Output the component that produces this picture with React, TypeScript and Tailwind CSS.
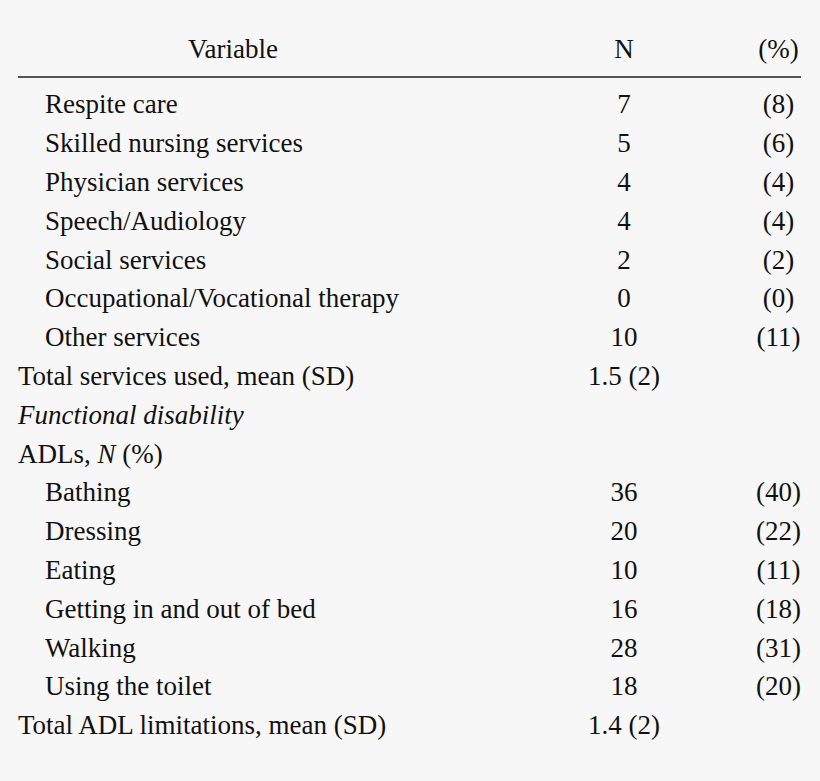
type Row = {
  label: React.ReactNode;
  n?: string;
  pct?: string;
  indent?: boolean;
};

const rows: Row[] = [
  { label: "Respite care", n: "7", pct: "(8)", indent: true },
  { label: "Skilled nursing services", n: "5", pct: "(6)", indent: true },
  { label: "Physician services", n: "4", pct: "(4)", indent: true },
  { label: "Speech/Audiology", n: "4", pct: "(4)", indent: true },
  { label: "Social services", n: "2", pct: "(2)", indent: true },
  { label: "Occupational/Vocational therapy", n: "0", pct: "(0)", indent: true },
  { label: "Other services", n: "10", pct: "(11)", indent: true },
  { label: "Total services used, mean (SD)", n: "1.5 (2)" },
  { label: <em>Functional disability</em> },
  {
    label: (
      <>
        ADLs, <em>N</em> (%)
      </>
    ),
  },
  { label: "Bathing", n: "36", pct: "(40)", indent: true },
  { label: "Dressing", n: "20", pct: "(22)", indent: true },
  { label: "Eating", n: "10", pct: "(11)", indent: true },
  { label: "Getting in and out of bed", n: "16", pct: "(18)", indent: true },
  { label: "Walking", n: "28", pct: "(31)", indent: true },
  { label: "Using the toilet", n: "18", pct: "(20)", indent: true },
  { label: "Total ADL limitations, mean (SD)", n: "1.4 (2)" },
];

export default function App() {
  return (
    <div
      className="w-[820px] h-[781px] bg-[#f7f7f7] text-[#111] text-[27px] leading-[38.8px] pl-[18px] pt-[29.6px]"
      style={{ fontFamily: '"Liberation Serif", "Times New Roman", serif' }}
    >
      <div className="w-[783px]">
        {/* Header */}
        <div className="grid grid-cols-[1fr_120px_117px] pb-[7.4px] border-b-2 border-[#555]">
          <div className="pl-[170px]">Variable</div>
          <div className="text-center">N</div>
          <div className="pl-[72px] text-center">(%)</div>
        </div>

        {/* Body */}
        <div className="mt-[7.6px]">
          {rows.map((r, i) => (
            <div key={i} className="grid grid-cols-[1fr_120px_117px]">
              <div className={r.indent ? "pl-[27px]" : ""}>{r.label}</div>
              <div className="text-center whitespace-nowrap">{r.n}</div>
              <div className="pl-[72px] text-center">{r.pct}</div>
            </div>
          ))}
        </div>
      </div>
    </div>
  );
}
